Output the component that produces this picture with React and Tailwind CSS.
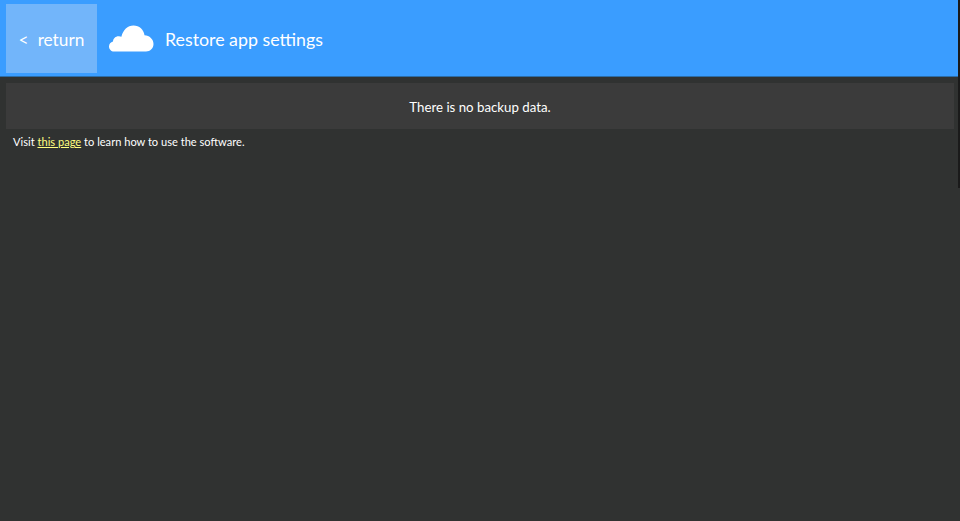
export default function App() {
  return (
    <div className="relative h-[521px] w-[960px] overflow-hidden flex flex-col bg-[#303231] text-white font-['Lato',sans-serif]">
      <header className="h-[77px] shrink-0 flex items-start bg-[#3a9dff] border-b border-[#2b6da8]">
        <button className="mt-1 ml-[6px] w-[91px] h-[69px] pt-[2px] flex items-center justify-center gap-[9px] bg-[#72b5fa] text-[17.3px]">
          <span>&lt;</span>
          <span>return</span>
        </button>
        <div className="h-[77px] flex items-center ml-3 gap-[11px]">
          <svg width="45" height="27" viewBox="0 0 45 27" fill="#fff">
            <path d="M5 26.500C2.200 26.500 0 24.200 0 21.400c0-2.500 1.700-4.500 4-5 .3-3.300 2.900-5.500 6-5.200.9 0 1.700.2 2.400.6C14 5 18.600.5 24.500.5c5.800 0 10.400 4.200 11 9.800 5 .3 9 3.900 9 8.700 0 4.300-3.200 7.500-7.500 7.500z" />
          </svg>
          <span className="text-[17.8px] pt-[2px]">Restore app settings</span>
        </div>
      </header>
      <div className="flex-1 px-[6px] pt-[6px]">
        <div className="h-[46px] pt-[3px] flex items-center justify-center bg-[#3b3b3b] text-[13.25px]">
          There is no backup data.
        </div>
        <p className="mt-[5px] ml-[7px] text-[11.1px]">
          Visit <a className="underline text-[#ffff80]">this page</a> to learn how to use the software.
        </p>
      </div>
      <div className="absolute right-0 top-0 w-[2px] h-[188px] bg-[#1a1a1a]"></div>
    </div>
  );
}
